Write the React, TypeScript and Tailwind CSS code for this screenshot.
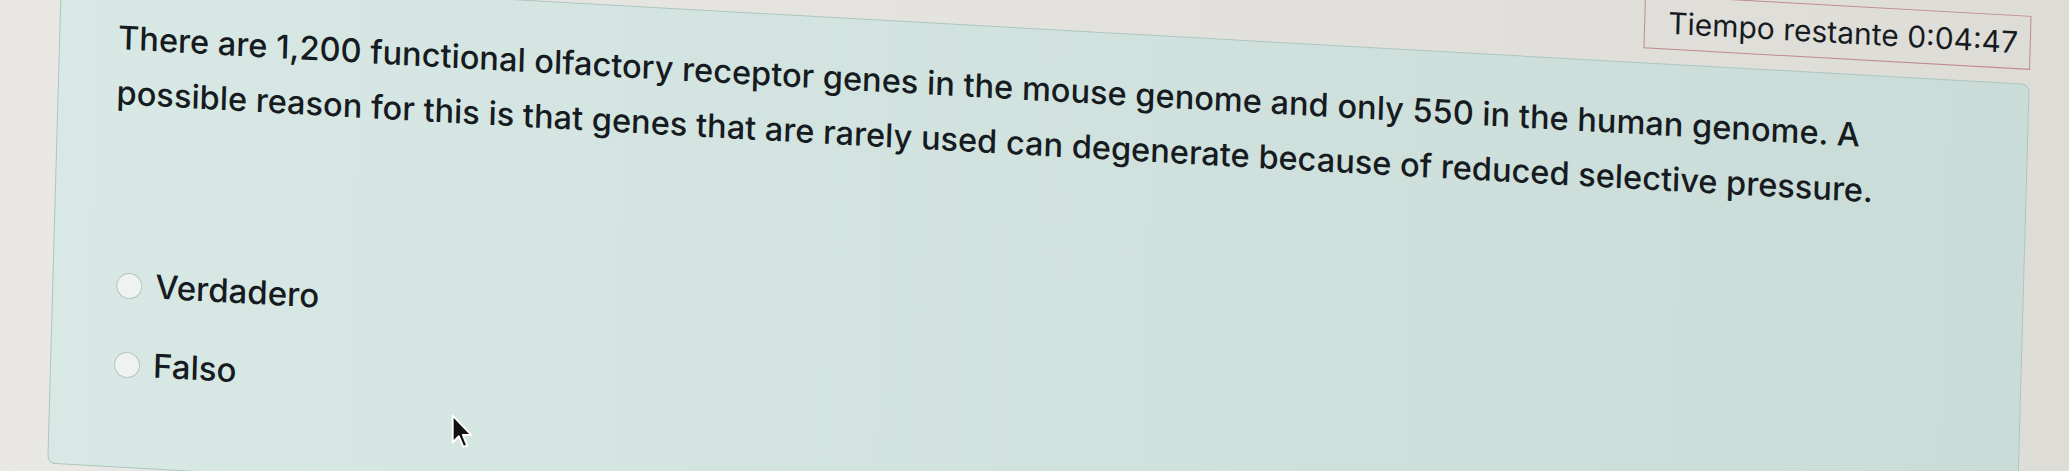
import React from 'react';

const font = { fontFamily: 'Inter, "Liberation Sans", Arial, sans-serif' };

function Radio({ label }: { label: string }) {
  return (
    <label className="flex items-center gap-[13px] h-[44px]">
      <span className="w-[26px] h-[26px] rounded-full border-[1.5px] border-[#b9c3c1] bg-[#eef2f1] ml-[5px] shrink-0" />
      <span className="text-[33px] font-medium text-[#161b21]">{label}</span>
    </label>
  );
}

function Cursor() {
  return (
    <svg className="absolute left-[451px] top-[414px]" width="24" height="36" viewBox="0 0 14 21">
      <path d="M1 1 L1 16.5 L4.6 13 L7.2 19.2 L9.4 18.3 L6.9 12.2 L11.8 12.2 Z" fill="#111" stroke="#fff" strokeWidth="1.1" strokeLinejoin="round" />
    </svg>
  );
}

export default function App() {
  return (
    <div className="relative w-[2069px] h-[471px] overflow-hidden bg-linear-to-r from-[#e9e8e4] to-[#dddcd7]" style={font}>
      <div className="w-[2069px] origin-top-right rotate-[1.6deg] skew-y-[1.6deg] flex flex-col pt-[18px] pl-[61px] pr-[37px]">
        <div className="self-end w-[387px] h-[54px] border border-[#c28a8c] flex items-center pl-[23px] text-[30px] text-[#161b21]">
          Tiempo restante 0:04:47
        </div>
        <div className="mt-[14px] h-[490px] rounded-[8px] border border-[#a9c6c1] bg-linear-to-r from-[#d8e9e5] to-[#cadcd7] pt-[32px] pl-[58px] pr-[50px]">
          <p className="text-[32.6px] font-medium leading-[55px] text-[#161b21]">
            There are 1,200 functional olfactory receptor genes in the mouse genome and only 550 in the human genome. A possible reason for this is that genes that are rarely used can degenerate because of reduced selective pressure.
          </p>
          <div className="mt-[143px] flex flex-col gap-[35px]">
            <Radio label="Verdadero" />
            <Radio label="Falso" />
          </div>
        </div>
      </div>
      <Cursor />
    </div>
  );
}
